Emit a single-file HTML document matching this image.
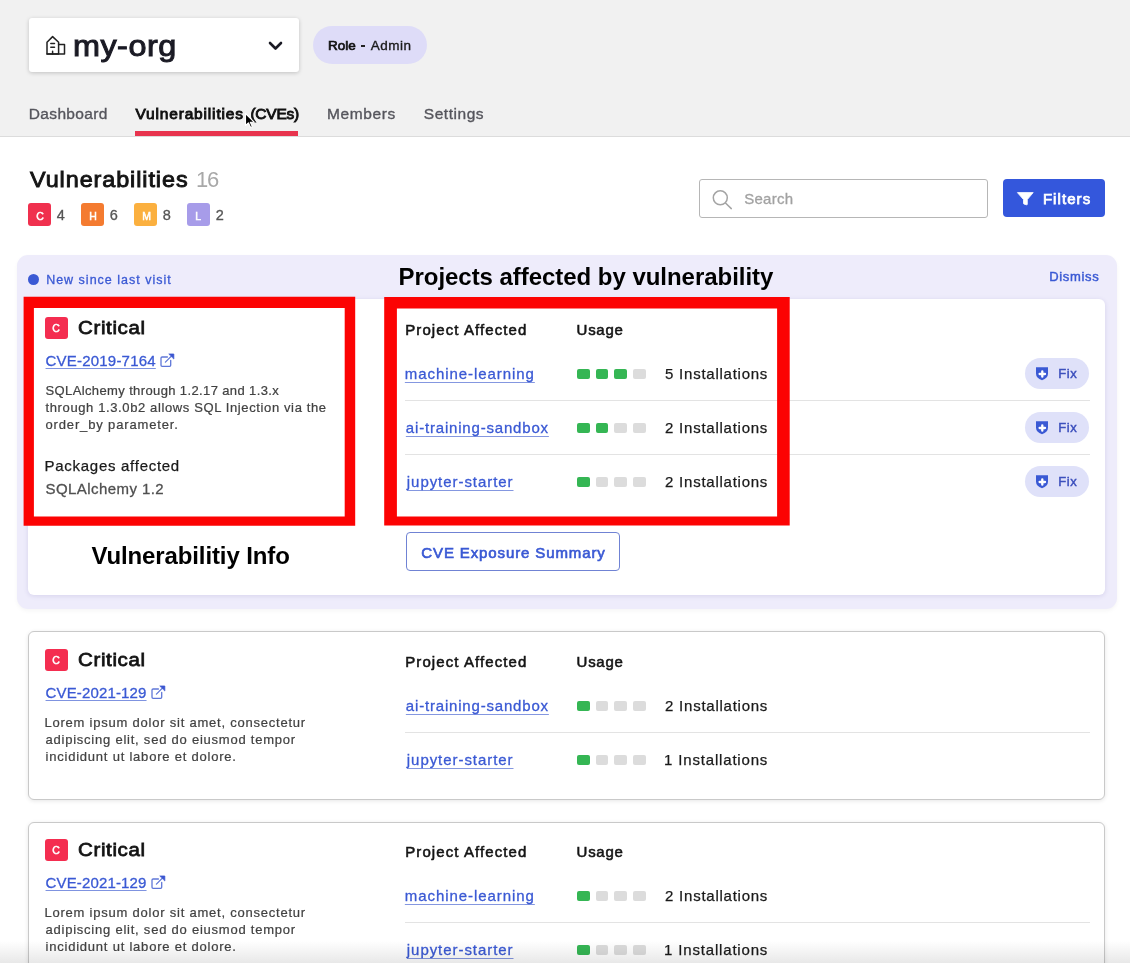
<!DOCTYPE html>
<html><head><meta charset="utf-8"><title>Vulnerabilities</title>
<style>
html,body{margin:0;padding:0;}
body{width:1130px;height:963px;overflow:hidden;position:relative;background:#fff;font-family:"Liberation Sans",sans-serif;}
.t{position:absolute;line-height:0;white-space:nowrap;}
.b{position:absolute;box-sizing:content-box;}
svg.b{overflow:visible;}
</style></head><body>
<div class="b" style="left:0px;top:0px;width:1130px;height:136px;background:#f1f1f1;border-bottom:1px solid #dcdcdc;"></div>
<div class="b" style="left:29px;top:18px;width:269.5px;height:54px;background:#fff;border-radius:3px;box-shadow:0 1px 4px rgba(0,0,0,0.20);"></div>
<svg class="b" style="left:44px;top:34px" width="24" height="24" viewBox="0 0 24 24" fill="none" stroke="#222" stroke-width="1.5" stroke-linejoin="round" stroke-linecap="round">
<path d="M3 20V8.2L8.6 2.6L14.6 8.2V20Z"/><path d="M14.6 10.4H20.5V20H3"/><path d="M6.8 9.5H10.5M6.8 13.3H10.5M8.6 17.3V20"/></svg>
<div class="t" style="left:73.00px;top:46.25px;font-size:29px;color:#1a1a24;letter-spacing:0.462px;-webkit-text-stroke:1.0px #1a1a24;transform:scaleX(1.1158);transform-origin:0.50px 0;">my-org</div>
<svg class="b" style="left:267px;top:39px" width="17" height="14" viewBox="0 0 17 14" fill="none" stroke="#1a1a24" stroke-width="2.6" stroke-linecap="round" stroke-linejoin="round"><path d="M3 4L8.5 9.5L14 4"/></svg>
<div class="b" style="left:313px;top:26px;width:114px;height:38px;background:#dedcf8;border-radius:19px;"></div>
<div class="t" style="left:327.95px;top:45.52px;font-size:13.5px;color:#111;letter-spacing:0.014px;-webkit-text-stroke:0.7px #111;">Role</div>
<div class="b" style="left:361.4px;top:45.4px;width:3.4px;height:1.6px;background:#222;"></div>
<div class="t" style="left:370.78px;top:45.52px;font-size:13.5px;color:#1a1a1a;letter-spacing:0.523px;-webkit-text-stroke:0.35px #1a1a1a;">Admin</div>
<div class="t" style="left:28.78px;top:113.93px;font-size:15.5px;color:#55555c;letter-spacing:0.355px;-webkit-text-stroke:0.35px #55555c;">Dashboard</div>
<div class="t" style="left:135.45px;top:113.93px;font-size:15.5px;color:#111;letter-spacing:0.831px;-webkit-text-stroke:0.9px #111;">Vulnerabilities</div>
<div class="t" style="left:250.45px;top:113.93px;font-size:15.5px;color:#111;letter-spacing:-0.236px;-webkit-text-stroke:0.9px #111;">(CVEs)</div>
<div class="t" style="left:326.98px;top:113.93px;font-size:15.5px;color:#55555c;letter-spacing:0.601px;-webkit-text-stroke:0.35px #55555c;">Members</div>
<div class="t" style="left:423.78px;top:113.93px;font-size:15.5px;color:#55555c;letter-spacing:0.542px;-webkit-text-stroke:0.35px #55555c;">Settings</div>
<div class="b" style="left:135px;top:131px;width:163px;height:5px;background:#e8344e;"></div>
<svg class="b" style="left:244px;top:112.3px" width="12" height="17" viewBox="0 0 12 17"><path d="M1.5 1.5V13.5L4.4 10.8L6.6 15.6L8.4 14.8L6.3 10.2H10.2Z" fill="#000" stroke="#fff" stroke-width="1.1" stroke-linejoin="round"/></svg>
<div class="t" style="left:29.75px;top:179.97px;font-size:22px;color:#141414;letter-spacing:0.865px;-webkit-text-stroke:0.9px #141414;transform:scaleX(1.0626);transform-origin:-0.45px 0;">Vulnerabilities</div>
<div class="t" style="left:196.00px;top:179.97px;font-size:22px;color:#a8a8a8;letter-spacing:-1.235px;">16</div>
<div class="b" style="left:28px;top:203px;width:23px;height:23px;background:#f0304e;border-radius:3px;"></div>
<div class="t" style="left:36.15px;top:215.66px;font-size:10.5px;color:#fff;-webkit-text-stroke:0.5px #fff;">C</div>
<div class="t" style="left:56.85px;top:215.17px;font-size:14.5px;color:#555;-webkit-text-stroke:0.3px #555;">4</div>
<div class="b" style="left:81px;top:203px;width:23px;height:23px;background:#f47b30;border-radius:3px;"></div>
<div class="t" style="left:89.15px;top:215.66px;font-size:10.5px;color:#fff;-webkit-text-stroke:0.5px #fff;">H</div>
<div class="t" style="left:109.85px;top:215.17px;font-size:14.5px;color:#555;-webkit-text-stroke:0.3px #555;">6</div>
<div class="b" style="left:134px;top:203px;width:23px;height:23px;background:#fbb03f;border-radius:3px;"></div>
<div class="t" style="left:142.15px;top:215.66px;font-size:10.5px;color:#fff;-webkit-text-stroke:0.5px #fff;">M</div>
<div class="t" style="left:162.85px;top:215.17px;font-size:14.5px;color:#555;-webkit-text-stroke:0.3px #555;">8</div>
<div class="b" style="left:187px;top:203px;width:23px;height:23px;background:#a79ce9;border-radius:3px;"></div>
<div class="t" style="left:195.15px;top:215.66px;font-size:10.5px;color:#fff;-webkit-text-stroke:0.5px #fff;">L</div>
<div class="t" style="left:215.85px;top:215.17px;font-size:14.5px;color:#555;-webkit-text-stroke:0.3px #555;">2</div>
<div class="b" style="left:699px;top:179px;width:287px;height:36.6px;border:1px solid #b6b6b6;border-radius:3px;background:#fff;"></div>
<svg class="b" style="left:710px;top:187px" width="24" height="24" viewBox="0 0 24 24" fill="none" stroke="#a4a4a4" stroke-width="1.5" stroke-linecap="round"><circle cx="10.3" cy="10.8" r="7"/><path d="M15.5 16L21.3 21.6"/></svg>
<div class="t" style="left:744.15px;top:198.80px;font-size:15px;color:#a2a2a2;letter-spacing:0.303px;-webkit-text-stroke:0.3px #a2a2a2;">Search</div>
<div class="b" style="left:1003.3px;top:179.2px;width:101.5px;height:38.3px;background:#3457dc;border-radius:4px;"></div>
<svg class="b" style="left:1015px;top:190px" width="20" height="17" viewBox="0 0 20 17"><path d="M2.4 2.6H18.2L12.3 9.6V14.2Q12.3 15 11.5 14.8L9.3 14.2Q8.5 14 8.5 13.2V9.6Z" fill="#fff" stroke="#fff" stroke-width="0.8" stroke-linejoin="round"/></svg>
<div class="t" style="left:1042.88px;top:199.10px;font-size:15px;color:#fff;letter-spacing:1.070px;-webkit-text-stroke:0.75px #fff;">Filters</div>
<div class="b" style="left:17px;top:255px;width:1100px;height:353.6px;background:#eeecfb;border-radius:11px;box-shadow:0 2px 4px rgba(0,0,0,0.04);"></div>
<div class="b" style="left:28px;top:299px;width:1077px;height:296px;background:#fff;border-radius:6px;box-shadow:0 1px 5px rgba(70,60,150,0.14);"></div>
<div class="b" style="left:28px;top:274.2px;width:11px;height:11px;background:#3a59d4;border-radius:50%;"></div>
<div class="t" style="left:46.15px;top:280.07px;font-size:12.5px;color:#3a59d4;letter-spacing:0.999px;-webkit-text-stroke:0.3px #3a59d4;">New since last visit</div>
<div class="t" style="left:1049.22px;top:277.49px;font-size:13px;color:#3a59d4;letter-spacing:0.676px;-webkit-text-stroke:0.45px #3a59d4;">Dismiss</div>
<div class="b" style="left:45px;top:316.5px;width:22.5px;height:22.5px;background:#f42d50;border-radius:3px;"></div>
<div class="t" style="left:52.25px;top:327.66px;font-size:10.5px;color:#fff;-webkit-text-stroke:0.5px #fff;">C</div>
<div class="t" style="left:78.40px;top:328.01px;font-size:19px;color:#141414;letter-spacing:0.588px;-webkit-text-stroke:0.8px #141414;transform:scaleX(1.0769);transform-origin:-0.40px 0;">Critical</div>
<div class="t" style="left:45.55px;top:361.20px;font-size:15px;color:#3a59d4;letter-spacing:0.206px;-webkit-text-stroke:0.3px #3a59d4;text-decoration:underline;text-underline-offset:2px;text-decoration-thickness:1px;text-decoration-color:#7f93e0;">CVE-2019-7164</div>
<svg class="b" style="left:158.0px;top:353px" width="17" height="15" viewBox="0 0 17 15" fill="none" stroke="#5f77d8" stroke-width="1.3" stroke-linecap="round" stroke-linejoin="round"><path d="M9.4 4H4.1Q3 4 3 5.1V12.2Q3 13.3 4.1 13.3H11.6Q12.7 13.3 12.7 12.2V7.3"/><path d="M7.4 9.1L13.6 2.9"/><path d="M11.2 1H15.8V5.6Z" fill="#3a55d0" stroke="#3a55d0" stroke-width="0.8"/></svg>
<div class="t" style="left:45.51px;top:390.89px;font-size:13px;color:#424242;letter-spacing:0.378px;-webkit-text-stroke:0.22px #424242;">SQLAlchemy through 1.2.17 and 1.3.x</div>
<div class="t" style="left:45.51px;top:408.19px;font-size:13px;color:#424242;letter-spacing:0.619px;-webkit-text-stroke:0.22px #424242;">through 1.3.0b2 allows SQL Injection via the</div>
<div class="t" style="left:45.51px;top:425.49px;font-size:13px;color:#424242;letter-spacing:0.852px;-webkit-text-stroke:0.22px #424242;">order_by parameter.</div>
<div class="t" style="left:44.52px;top:466.00px;font-size:15px;color:#1a1a1a;letter-spacing:0.722px;-webkit-text-stroke:0.25px #1a1a1a;">Packages affected</div>
<div class="t" style="left:45.55px;top:488.50px;font-size:15px;color:#505050;letter-spacing:0.422px;-webkit-text-stroke:0.3px #505050;">SQLAlchemy 1.2</div>
<div class="t" style="left:405.27px;top:330.10px;font-size:15px;color:#141414;letter-spacing:1.078px;-webkit-text-stroke:0.55px #141414;">Project Affected</div>
<div class="t" style="left:576.57px;top:330.10px;font-size:15px;color:#141414;letter-spacing:0.733px;-webkit-text-stroke:0.55px #141414;">Usage</div>
<div class="t" style="left:404.85px;top:374.10px;font-size:15px;color:#3a59d4;letter-spacing:0.932px;-webkit-text-stroke:0.3px #3a59d4;text-decoration:underline;text-underline-offset:2.5px;text-decoration-thickness:1px;text-decoration-color:#8497e0;">machine-learning</div>
<div class="b" style="left:577.0px;top:369.3px;width:12.5px;height:10px;border-radius:2px;background:#35b654;"></div>
<div class="b" style="left:595.7px;top:369.3px;width:12.5px;height:10px;border-radius:2px;background:#35b654;"></div>
<div class="b" style="left:614.4px;top:369.3px;width:12.5px;height:10px;border-radius:2px;background:#35b654;"></div>
<div class="b" style="left:633.1px;top:369.3px;width:12.5px;height:10px;border-radius:2px;background:#dcdcdc;"></div>
<div class="t" style="left:665.12px;top:374.10px;font-size:15px;color:#1a1a1a;letter-spacing:0.752px;-webkit-text-stroke:0.25px #1a1a1a;">5 Installations</div>
<div class="b" style="left:405px;top:399.8px;width:685px;height:1px;background:#e3e3e3;"></div>
<div class="t" style="left:405.85px;top:428.10px;font-size:15px;color:#3a59d4;letter-spacing:0.813px;-webkit-text-stroke:0.3px #3a59d4;text-decoration:underline;text-underline-offset:2.5px;text-decoration-thickness:1px;text-decoration-color:#8497e0;">ai-training-sandbox</div>
<div class="b" style="left:577.0px;top:423.3px;width:12.5px;height:10px;border-radius:2px;background:#35b654;"></div>
<div class="b" style="left:595.7px;top:423.3px;width:12.5px;height:10px;border-radius:2px;background:#35b654;"></div>
<div class="b" style="left:614.4px;top:423.3px;width:12.5px;height:10px;border-radius:2px;background:#dcdcdc;"></div>
<div class="b" style="left:633.1px;top:423.3px;width:12.5px;height:10px;border-radius:2px;background:#dcdcdc;"></div>
<div class="t" style="left:665.12px;top:428.10px;font-size:15px;color:#1a1a1a;letter-spacing:0.752px;-webkit-text-stroke:0.25px #1a1a1a;">2 Installations</div>
<div class="b" style="left:405px;top:453.8px;width:685px;height:1px;background:#e3e3e3;"></div>
<div class="t" style="left:406.85px;top:482.10px;font-size:15px;color:#3a59d4;letter-spacing:0.941px;-webkit-text-stroke:0.3px #3a59d4;text-decoration:underline;text-underline-offset:2.5px;text-decoration-thickness:1px;text-decoration-color:#8497e0;">jupyter-starter</div>
<div class="b" style="left:577.0px;top:477.3px;width:12.5px;height:10px;border-radius:2px;background:#35b654;"></div>
<div class="b" style="left:595.7px;top:477.3px;width:12.5px;height:10px;border-radius:2px;background:#dcdcdc;"></div>
<div class="b" style="left:614.4px;top:477.3px;width:12.5px;height:10px;border-radius:2px;background:#dcdcdc;"></div>
<div class="b" style="left:633.1px;top:477.3px;width:12.5px;height:10px;border-radius:2px;background:#dcdcdc;"></div>
<div class="t" style="left:665.12px;top:482.10px;font-size:15px;color:#1a1a1a;letter-spacing:0.752px;-webkit-text-stroke:0.25px #1a1a1a;">2 Installations</div>
<div class="b" style="left:1025px;top:358px;width:64px;height:31px;background:#dfe1f9;border-radius:16px;"></div>
<svg class="b" style="left:1035px;top:366px" width="14" height="15" viewBox="0 0 14 15"><path d="M1 1.2H13V7.5Q13 12 7 14.2Q1 12 1 7.5Z" fill="#3a59d4"/><path d="M7.3 5.3V10.7M4.6 8H10" stroke="#fff" stroke-width="2.3" stroke-linecap="round"/></svg>
<div class="t" style="left:1058.22px;top:374.49px;font-size:13px;color:#3d50bd;letter-spacing:0.610px;-webkit-text-stroke:0.45px #3d50bd;">Fix</div>
<div class="b" style="left:1025px;top:412px;width:64px;height:31px;background:#dfe1f9;border-radius:16px;"></div>
<svg class="b" style="left:1035px;top:420px" width="14" height="15" viewBox="0 0 14 15"><path d="M1 1.2H13V7.5Q13 12 7 14.2Q1 12 1 7.5Z" fill="#3a59d4"/><path d="M7.3 5.3V10.7M4.6 8H10" stroke="#fff" stroke-width="2.3" stroke-linecap="round"/></svg>
<div class="t" style="left:1058.22px;top:428.49px;font-size:13px;color:#3d50bd;letter-spacing:0.610px;-webkit-text-stroke:0.45px #3d50bd;">Fix</div>
<div class="b" style="left:1025px;top:466px;width:64px;height:31px;background:#dfe1f9;border-radius:16px;"></div>
<svg class="b" style="left:1035px;top:474px" width="14" height="15" viewBox="0 0 14 15"><path d="M1 1.2H13V7.5Q13 12 7 14.2Q1 12 1 7.5Z" fill="#3a59d4"/><path d="M7.3 5.3V10.7M4.6 8H10" stroke="#fff" stroke-width="2.3" stroke-linecap="round"/></svg>
<div class="t" style="left:1058.22px;top:482.49px;font-size:13px;color:#3d50bd;letter-spacing:0.610px;-webkit-text-stroke:0.45px #3d50bd;">Fix</div>
<div class="b" style="left:406px;top:532.4px;width:212px;height:36.4px;border:1px solid #7083d4;border-radius:4px;background:#fff;"></div>
<div class="t" style="left:421.32px;top:553.10px;font-size:15px;color:#3a59d4;letter-spacing:0.880px;-webkit-text-stroke:0.65px #3a59d4;">CVE Exposure Summary</div>
<div class="b" style="left:27.5px;top:631px;width:1075px;height:166.5px;border:1px solid #c9c9c9;border-radius:6px;background:#fff;box-shadow:0 1px 4px rgba(0,0,0,0.10);"></div>
<div class="b" style="left:45px;top:648.5px;width:22.5px;height:22.5px;background:#f42d50;border-radius:3px;"></div>
<div class="t" style="left:52.25px;top:659.66px;font-size:10.5px;color:#fff;-webkit-text-stroke:0.5px #fff;">C</div>
<div class="t" style="left:78.40px;top:660.01px;font-size:19px;color:#141414;letter-spacing:0.588px;-webkit-text-stroke:0.8px #141414;transform:scaleX(1.0769);transform-origin:-0.40px 0;">Critical</div>
<div class="t" style="left:45.55px;top:693.20px;font-size:15px;color:#3a59d4;letter-spacing:0.147px;-webkit-text-stroke:0.3px #3a59d4;text-decoration:underline;text-underline-offset:2px;text-decoration-thickness:1px;text-decoration-color:#7f93e0;">CVE-2021-129</div>
<svg class="b" style="left:148.8px;top:685px" width="17" height="15" viewBox="0 0 17 15" fill="none" stroke="#5f77d8" stroke-width="1.3" stroke-linecap="round" stroke-linejoin="round"><path d="M9.4 4H4.1Q3 4 3 5.1V12.2Q3 13.3 4.1 13.3H11.6Q12.7 13.3 12.7 12.2V7.3"/><path d="M7.4 9.1L13.6 2.9"/><path d="M11.2 1H15.8V5.6Z" fill="#3a55d0" stroke="#3a55d0" stroke-width="0.8"/></svg>
<div class="t" style="left:44.51px;top:722.89px;font-size:13px;color:#424242;letter-spacing:0.776px;-webkit-text-stroke:0.22px #424242;">Lorem ipsum dolor sit amet, consectetur</div>
<div class="t" style="left:45.51px;top:740.19px;font-size:13px;color:#424242;letter-spacing:0.770px;-webkit-text-stroke:0.22px #424242;">adipiscing elit, sed do eiusmod tempor</div>
<div class="t" style="left:45.51px;top:757.49px;font-size:13px;color:#424242;letter-spacing:0.782px;-webkit-text-stroke:0.22px #424242;">incididunt ut labore et dolore.</div>
<div class="t" style="left:405.27px;top:662.10px;font-size:15px;color:#141414;letter-spacing:1.078px;-webkit-text-stroke:0.55px #141414;">Project Affected</div>
<div class="t" style="left:576.57px;top:662.10px;font-size:15px;color:#141414;letter-spacing:0.733px;-webkit-text-stroke:0.55px #141414;">Usage</div>
<div class="t" style="left:405.85px;top:706.10px;font-size:15px;color:#3a59d4;letter-spacing:0.813px;-webkit-text-stroke:0.3px #3a59d4;text-decoration:underline;text-underline-offset:2.5px;text-decoration-thickness:1px;text-decoration-color:#8497e0;">ai-training-sandbox</div>
<div class="b" style="left:577.0px;top:701.3px;width:12.5px;height:10px;border-radius:2px;background:#35b654;"></div>
<div class="b" style="left:595.7px;top:701.3px;width:12.5px;height:10px;border-radius:2px;background:#dcdcdc;"></div>
<div class="b" style="left:614.4px;top:701.3px;width:12.5px;height:10px;border-radius:2px;background:#dcdcdc;"></div>
<div class="b" style="left:633.1px;top:701.3px;width:12.5px;height:10px;border-radius:2px;background:#dcdcdc;"></div>
<div class="t" style="left:665.12px;top:706.10px;font-size:15px;color:#1a1a1a;letter-spacing:0.752px;-webkit-text-stroke:0.25px #1a1a1a;">2 Installations</div>
<div class="b" style="left:405px;top:731.8px;width:685px;height:1px;background:#e3e3e3;"></div>
<div class="t" style="left:406.85px;top:760.10px;font-size:15px;color:#3a59d4;letter-spacing:0.941px;-webkit-text-stroke:0.3px #3a59d4;text-decoration:underline;text-underline-offset:2.5px;text-decoration-thickness:1px;text-decoration-color:#8497e0;">jupyter-starter</div>
<div class="b" style="left:577.0px;top:755.3px;width:12.5px;height:10px;border-radius:2px;background:#35b654;"></div>
<div class="b" style="left:595.7px;top:755.3px;width:12.5px;height:10px;border-radius:2px;background:#dcdcdc;"></div>
<div class="b" style="left:614.4px;top:755.3px;width:12.5px;height:10px;border-radius:2px;background:#dcdcdc;"></div>
<div class="b" style="left:633.1px;top:755.3px;width:12.5px;height:10px;border-radius:2px;background:#dcdcdc;"></div>
<div class="t" style="left:664.12px;top:760.10px;font-size:15px;color:#1a1a1a;letter-spacing:0.823px;-webkit-text-stroke:0.25px #1a1a1a;">1 Installations</div>
<div class="b" style="left:27.5px;top:821.5px;width:1075px;height:200px;border:1px solid #c9c9c9;border-radius:6px;background:#fff;box-shadow:0 1px 4px rgba(0,0,0,0.10);"></div>
<div class="b" style="left:45px;top:838.5px;width:22.5px;height:22.5px;background:#f42d50;border-radius:3px;"></div>
<div class="t" style="left:52.25px;top:849.66px;font-size:10.5px;color:#fff;-webkit-text-stroke:0.5px #fff;">C</div>
<div class="t" style="left:78.40px;top:850.01px;font-size:19px;color:#141414;letter-spacing:0.588px;-webkit-text-stroke:0.8px #141414;transform:scaleX(1.0769);transform-origin:-0.40px 0;">Critical</div>
<div class="t" style="left:45.55px;top:883.20px;font-size:15px;color:#3a59d4;letter-spacing:0.147px;-webkit-text-stroke:0.3px #3a59d4;text-decoration:underline;text-underline-offset:2px;text-decoration-thickness:1px;text-decoration-color:#7f93e0;">CVE-2021-129</div>
<svg class="b" style="left:148.8px;top:875px" width="17" height="15" viewBox="0 0 17 15" fill="none" stroke="#5f77d8" stroke-width="1.3" stroke-linecap="round" stroke-linejoin="round"><path d="M9.4 4H4.1Q3 4 3 5.1V12.2Q3 13.3 4.1 13.3H11.6Q12.7 13.3 12.7 12.2V7.3"/><path d="M7.4 9.1L13.6 2.9"/><path d="M11.2 1H15.8V5.6Z" fill="#3a55d0" stroke="#3a55d0" stroke-width="0.8"/></svg>
<div class="t" style="left:44.51px;top:912.89px;font-size:13px;color:#424242;letter-spacing:0.776px;-webkit-text-stroke:0.22px #424242;">Lorem ipsum dolor sit amet, consectetur</div>
<div class="t" style="left:45.51px;top:930.19px;font-size:13px;color:#424242;letter-spacing:0.770px;-webkit-text-stroke:0.22px #424242;">adipiscing elit, sed do eiusmod tempor</div>
<div class="t" style="left:45.51px;top:947.49px;font-size:13px;color:#424242;letter-spacing:0.782px;-webkit-text-stroke:0.22px #424242;">incididunt ut labore et dolore.</div>
<div class="t" style="left:405.27px;top:852.10px;font-size:15px;color:#141414;letter-spacing:1.078px;-webkit-text-stroke:0.55px #141414;">Project Affected</div>
<div class="t" style="left:576.57px;top:852.10px;font-size:15px;color:#141414;letter-spacing:0.733px;-webkit-text-stroke:0.55px #141414;">Usage</div>
<div class="t" style="left:404.85px;top:896.10px;font-size:15px;color:#3a59d4;letter-spacing:0.932px;-webkit-text-stroke:0.3px #3a59d4;text-decoration:underline;text-underline-offset:2.5px;text-decoration-thickness:1px;text-decoration-color:#8497e0;">machine-learning</div>
<div class="b" style="left:577.0px;top:891.3px;width:12.5px;height:10px;border-radius:2px;background:#35b654;"></div>
<div class="b" style="left:595.7px;top:891.3px;width:12.5px;height:10px;border-radius:2px;background:#dcdcdc;"></div>
<div class="b" style="left:614.4px;top:891.3px;width:12.5px;height:10px;border-radius:2px;background:#dcdcdc;"></div>
<div class="b" style="left:633.1px;top:891.3px;width:12.5px;height:10px;border-radius:2px;background:#dcdcdc;"></div>
<div class="t" style="left:665.12px;top:896.10px;font-size:15px;color:#1a1a1a;letter-spacing:0.752px;-webkit-text-stroke:0.25px #1a1a1a;">2 Installations</div>
<div class="b" style="left:405px;top:921.8px;width:685px;height:1px;background:#e3e3e3;"></div>
<div class="t" style="left:406.85px;top:950.10px;font-size:15px;color:#3a59d4;letter-spacing:0.941px;-webkit-text-stroke:0.3px #3a59d4;text-decoration:underline;text-underline-offset:2.5px;text-decoration-thickness:1px;text-decoration-color:#8497e0;">jupyter-starter</div>
<div class="b" style="left:577.0px;top:945.3px;width:12.5px;height:10px;border-radius:2px;background:#35b654;"></div>
<div class="b" style="left:595.7px;top:945.3px;width:12.5px;height:10px;border-radius:2px;background:#dcdcdc;"></div>
<div class="b" style="left:614.4px;top:945.3px;width:12.5px;height:10px;border-radius:2px;background:#dcdcdc;"></div>
<div class="b" style="left:633.1px;top:945.3px;width:12.5px;height:10px;border-radius:2px;background:#dcdcdc;"></div>
<div class="t" style="left:664.12px;top:950.10px;font-size:15px;color:#1a1a1a;letter-spacing:0.823px;-webkit-text-stroke:0.25px #1a1a1a;">1 Installations</div>
<svg class="b" style="left:0;top:0" width="1130" height="963" viewBox="0 0 1130 963"><path d="M23.6 296.7H355.2V525.8H23.6Z M33.9 308.0V516.6H344.7V308.0Z M384.2 296.9H789.7V525.6H384.2Z M396.9 308.4V516.4H777.1V308.4Z " fill="#fc0303" fill-rule="evenodd"/></svg>
<div class="t" style="left:398.50px;top:276.88px;font-size:24px;color:#000;font-weight:bold;letter-spacing:-0.039px;">Projects affected by vulnerability</div>
<div class="t" style="left:91.40px;top:556.28px;font-size:24px;color:#000;font-weight:bold;letter-spacing:-0.111px;">Vulnerabilitiy Info</div>
<div class="b" style="left:0px;top:941px;width:1130px;height:22px;background:linear-gradient(to bottom,#ffffff,#e8e8e8);mix-blend-mode:multiply;"></div>
</body></html>
